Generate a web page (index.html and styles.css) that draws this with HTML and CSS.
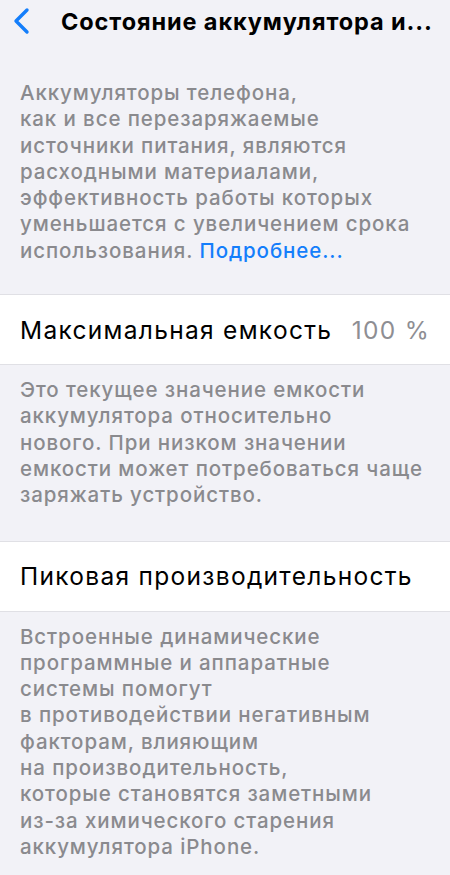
FILE: index.html
```html
<html>
<head>
    <meta charset="utf-8">
    <link rel="stylesheet" href="styles.css">
</head>
<body>
    <div class="navbar">
        <a class="back" href="#">
            <svg width="20" height="30" viewBox="0 0 20 30">
                <path d="M15 4 L4 15 L15 26" fill="none" stroke="#147efb" stroke-width="3.4" stroke-linecap="round" stroke-linejoin="round"/>
            </svg>
        </a>
        <h1 class="title">Состояние аккумулятора и...</h1>
    </div>

    <p class="note note-first">
        Аккумуляторы телефона,<br>
        как и все перезаряжаемые<br>
        источники питания, являются<br>
        расходными материалами,<br>
        эффективность работы которых<br>
        уменьшается с увеличением срока<br>
        использования. <a class="link" href="#">Подробнее...</a>
    </p>

    <div class="row">
        <span class="row-label">Максимальная емкость</span>
        <span class="row-value">100 %</span>
    </div>

    <p class="note">
        Это текущее значение емкости<br>
        аккумулятора относительно<br>
        нового. При низком значении<br>
        емкости может потребоваться чаще<br>
        заряжать устройство.
    </p>

    <div class="row">
        <span class="row-label">Пиковая производительность</span>
    </div>

    <p class="note">
        Встроенные динамические<br>
        программные и аппаратные<br>
        системы помогут<br>
        в противодействии негативным<br>
        факторам, влияющим<br>
        на производительность,<br>
        которые становятся заметными<br>
        из-за химического старения<br>
        аккумулятора iPhone.
    </p>
</body>
</html>
```

FILE: styles.css
```css
body { margin: 0; background: #f2f2f7; font-family: Inter, "Noto Sans", sans-serif; -webkit-font-smoothing: antialiased; }

.navbar { display: flex; align-items: center; height: 42px; padding: 0 12px; }
.back { display: flex; width: 49px; }
.title { margin: 0; font-size: 23.5px; font-weight: 700; color: #000; letter-spacing: 0.9px; white-space: nowrap; }

.note { margin: 0; padding: 12px 20px 32px; font-size: 20.5px; font-weight: 500; line-height: 26.3px; letter-spacing: 0.9px; color: #8a8a8e; white-space: nowrap; }
.note-first { padding-top: 38px; padding-bottom: 30px; }
.link { color: #147efb; text-decoration: none; }

.row { display: flex; align-items: center; justify-content: space-between; height: 69px; padding: 0 20px; background: #fff; border-top: 1px solid #e0e0e5; border-bottom: 1px solid #e0e0e5; }
.row-label { font-size: 24.5px; letter-spacing: 1.3px; color: #000; }
.row-value { font-size: 24.5px; letter-spacing: 1.3px; color: #8e8e93; }
```
